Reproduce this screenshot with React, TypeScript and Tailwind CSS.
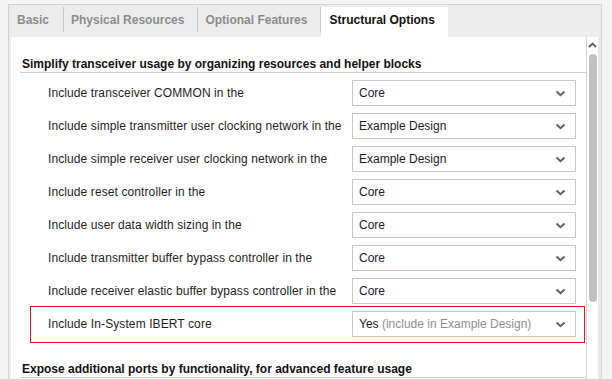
const rows = [
  { label: 'Include transceiver COMMON in the', value: 'Core' },
  { label: 'Include simple transmitter user clocking network in the', value: 'Example Design' },
  { label: 'Include simple receiver user clocking network in the', value: 'Example Design' },
  { label: 'Include reset controller in the', value: 'Core' },
  { label: 'Include user data width sizing in the', value: 'Core' },
  { label: 'Include transmitter buffer bypass controller in the', value: 'Core' },
  { label: 'Include receiver elastic buffer bypass controller in the', value: 'Core' },
];

const tabs = ['Basic', 'Physical Resources', 'Optional Features'];

function Chevron() {
  return (
    <svg width="11" height="7" viewBox="0 0 11 7" className="shrink-0">
      <path d="M1.5 1.5 L5.5 5.2 L9.5 1.5" fill="none" stroke="#606060" strokeWidth="2" />
    </svg>
  );
}

function Select({ children }: { children: React.ReactNode }) {
  return (
    <div className="w-[224px] h-[26px] shrink-0 border border-[#c6c6c6] bg-white flex items-center justify-between pl-[6px] pr-[9px] text-[#1a1a2a]">
      <span>{children}</span>
      <Chevron />
    </div>
  );
}

function Row({ label, value }: { label: string; value: string }) {
  return (
    <div className="flex items-center h-[26px] mt-[7px] pl-[37px] pr-[10px]">
      <span className="flex-1 text-[#1e1e1e] whitespace-nowrap tracking-[0.1px]">{label}</span>
      <Select>{value}</Select>
    </div>
  );
}

export default function App() {
  return (
    <div className="w-[612px] h-[379px] overflow-hidden bg-[#f4f4f4] pt-[4px] pl-[8px] text-[12px] leading-[14px] font-['Liberation_Sans',Arial,sans-serif]">
      <div className="w-[594px] h-[380px] border-t border-l border-r border-[#d2d2d2] bg-[#ececec] flex flex-col">
        {/* tabs */}
        <div className="h-[32px] flex items-start pt-[2px] font-bold">
          {tabs.map((t, i) => (
            <div key={t} className="flex items-start">
              <div className={`h-[25px] flex items-center text-[#8c8c8c] ${i === 0 ? 'pl-[8px] pr-[14px]' : 'pl-[7px] pr-[13px]'}`}>
                {t}
              </div>
              <div className="w-px h-[25px] bg-[#c8c8c8]" />
            </div>
          ))}
          <div className="h-[30px] bg-white pl-[8px] pr-[13px] pt-[6px] text-[#111]">Structural Options</div>
        </div>

        {/* body */}
        <div className="flex-1 flex pl-[2px]">
          <div className="w-[576px] bg-white border-r border-[#d6d6d6] flex flex-col">
            <div className="mt-[20px] ml-[9px] pl-[2px] pb-[1px] border-b border-[#cfcfcf] font-bold text-[#111]">
              Simplify transceiver usage by organizing resources and helper blocks
            </div>
            {rows.map((r) => (
              <Row key={r.label} label={r.label} value={r.value} />
            ))}
            <div className="mt-[2px] ml-[19px] mr-[1px] border border-[#e8101a] flex items-center pl-[17px] pr-[8px] pt-[4px] pb-[5px]">
              <span className="flex-1 text-[#1e1e1e] tracking-[0.1px]">Include In-System IBERT core</span>
              <Select>
                Yes <span className="text-[#8e8e8e]">(include in Example Design)</span>
              </Select>
            </div>
            <div className="mt-[19px] ml-[9px] pl-[2px] pb-[1px] border-b border-[#cfcfcf] font-bold text-[#111]">
              Expose additional ports by functionality, for advanced feature usage
            </div>
          </div>
          {/* scrollbar */}
          <div className="w-[11px] bg-white flex flex-col items-center pt-[5px]">
            <svg width="9" height="6" viewBox="0 0 9 6">
              <path d="M1 5 L4.5 1.5 L8 5" fill="none" stroke="#5a5a5a" strokeWidth="1.8" />
            </svg>
            <div className="mt-[6px] w-[8px] h-[248px] rounded-[4px] bg-[#c1c1c1]" />
          </div>
          <div className="w-[3px] bg-[#e8e8e8]" />
        </div>
      </div>
    </div>
  );
}
